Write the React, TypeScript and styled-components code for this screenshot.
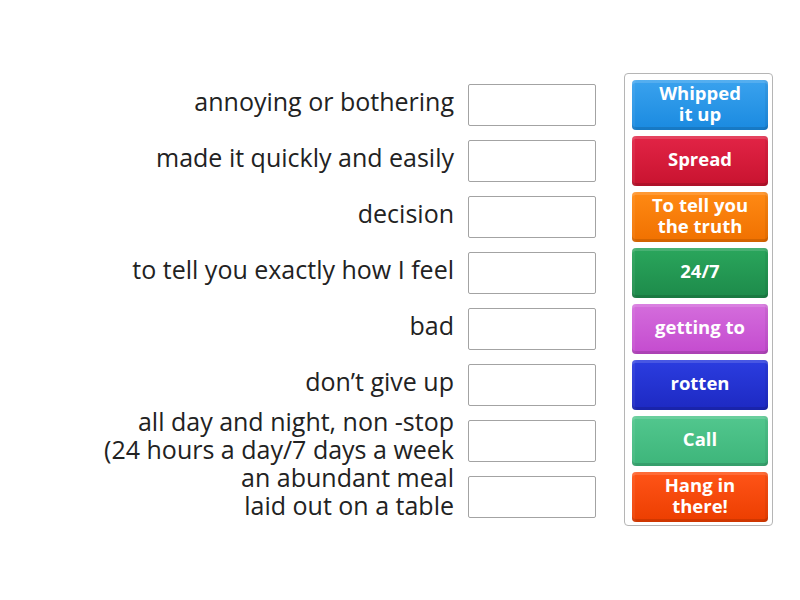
import React from 'react';
import styled, { createGlobalStyle } from 'styled-components';

const GlobalStyle = createGlobalStyle`
  html, body {
    margin: 0;
    padding: 0;
    background: #ffffff;
  }
  body {
    font-family: "Open Sans", "Noto Sans", sans-serif;
  }
`;

const Page = styled.div`
  width: 800px;
  height: 600px;
  display: flex;
  align-items: flex-start;
  padding-top: 73px;
  box-sizing: border-box;
`;

const MatchList = styled.div`
  display: flex;
  flex-direction: column;
  gap: 14px;
  margin-top: 11px;
`;

const MatchRow = styled.div`
  display: grid;
  grid-template-columns: 454px 128px;
  grid-template-rows: 42px;
  column-gap: 14px;
  align-items: center;
`;

const Prompt = styled.div<{ $multi: boolean }>`
  text-align: right;
  font-size: 25px;
  line-height: 28px;
  color: #222222;
  white-space: nowrap;
  margin-bottom: ${(p) => (p.$multi ? '13px' : '8px')};
`;

const DropBox = styled.div`
  height: 42px;
  box-sizing: border-box;
  border: 1px solid #a3a3a3;
  border-radius: 2px;
  background: #ffffff;
`;

const Tray = styled.div`
  margin-left: 28px;
  width: 149px;
  box-sizing: border-box;
  border: 1px solid #b5b5b5;
  border-radius: 4px;
  padding: 6px 4px 3px 7px;
  display: flex;
  flex-direction: column;
  gap: 6px;
`;

const Tile = styled.div<{ $top: string; $bottom: string }>`
  height: 50px;
  box-sizing: border-box;
  border-radius: 4px;
  background: linear-gradient(180deg, ${(p) => p.$top} 0%, ${(p) => p.$bottom} 100%);
  box-shadow: inset 0 3px 0 rgba(255, 255, 255, 0.14), inset 0 -3px 0 rgba(0, 0, 0, 0.12),
    inset 3px 0 0 rgba(255, 255, 255, 0.06), inset -3px 0 0 rgba(0, 0, 0, 0.05);
  display: flex;
  align-items: center;
  justify-content: center;
  text-align: center;
  color: #ffffff;
  font-weight: 700;
  font-size: 18.5px;
  line-height: 21px;
  padding: 0 6px 5px;
`;

const prompts = [
  'annoying or bothering',
  'made it quickly and easily',
  'decision',
  'to tell you exactly how I feel',
  'bad',
  "don’t give up",
  'all day and night, non -stop\n(24 hours a day/7 days a week',
  'an abundant meal\nlaid out on a table',
];

const tiles = [
  { text: 'Whipped\nit up', top: '#3aa2ee', bottom: '#1a8ae0' },
  { text: 'Spread', top: '#e22446', bottom: '#c8132f' },
  { text: 'To tell you\nthe truth', top: '#ff8a14', bottom: '#f07100' },
  { text: '24/7', top: '#2aa65c', bottom: '#1d8a4a' },
  { text: 'getting to', top: '#d46ddc', bottom: '#c44bcf' },
  { text: 'rotten', top: '#2b3de0', bottom: '#1d29c2' },
  { text: 'Call', top: '#52c78e', bottom: '#3db57a' },
  { text: 'Hang in\nthere!', top: '#ff5418', bottom: '#ec3e00' },
];

const Lines: React.FC<{ text: string }> = ({ text }) => (
  <>
    {text.split('\n').map((line, i) => (
      <div key={i}>{line}</div>
    ))}
  </>
);

export default function App() {
  return (
    <>
      <GlobalStyle />
      <Page>
        <MatchList>
          {prompts.map((p) => (
            <MatchRow key={p}>
              <Prompt $multi={p.includes('\n')}>
                <Lines text={p} />
              </Prompt>
              <DropBox />
            </MatchRow>
          ))}
        </MatchList>
        <Tray>
          {tiles.map((t) => (
            <Tile key={t.text} $top={t.top} $bottom={t.bottom}>
              <div>
                <Lines text={t.text} />
              </div>
            </Tile>
          ))}
        </Tray>
      </Page>
    </>
  );
}
